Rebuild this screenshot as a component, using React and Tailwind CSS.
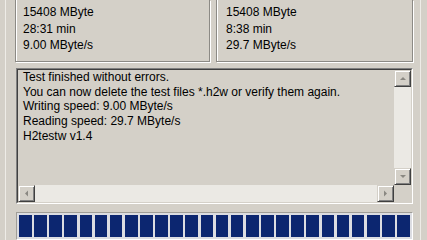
import React from 'react';

const font = "font-['Liberation_Sans',Arial,sans-serif]";

function Arrow({ dir }) {
  const pts = {
    up: '2,6 5,3 8,6',
    down: '2,3 5,6 8,3',
    left: '6,1.5 3,4.5 6,7.5',
    right: '3,1.5 6,4.5 3,7.5',
  }[dir];
  return (
    <svg width="10" height="9" viewBox="0 0 10 9">
      <polygon points={pts} fill="#8a8882" />
    </svg>
  );
}

function ScrollButton({ dir }) {
  return (
    <div className="w-[17px] h-[17px] shrink-0 bg-[#d4d0c8] border border-t-[#d4d0c8] border-l-[#d4d0c8] border-b-[#404040] border-r-[#404040] shadow-[inset_1px_1px_0_#ffffff,inset_-1px_-1px_0_#808080] flex items-center justify-center">
      <Arrow dir={dir} />
    </div>
  );
}

function GroupBox({ lines, indent }) {
  return (
    <div className={`flex-1 border-b border-l border-r border-[#8c8a85] shadow-[inset_1px_0_0_#ffffff,1px_1px_0_#ffffff] pt-[4px] ${indent}`}>
      {lines.map((l) => (
        <div key={l} className="leading-[16.5px]">{l}</div>
      ))}
    </div>
  );
}

export default function App() {
  const log = [
    'Test finished without errors.',
    'You can now delete the test files *.h2w or verify them again.',
    'Writing speed: 9.00 MByte/s',
    'Reading speed: 29.7 MByte/s',
    'H2testw v1.4',
  ];
  const blocks = Array.from({ length: 26 }, (_, i) => i);

  return (
    <div className={`w-[427px] h-[240px] overflow-hidden bg-[#d4d0c8] pl-[5px] pr-[6px] text-[12px] text-black ${font}`}>
      <div className="h-full border-l border-r border-[#eeece7] pl-[9px] pr-[7px] flex flex-col">
        <div className="flex gap-[6px] h-[62px] shrink-0">
          <GroupBox indent="pl-[7px]" lines={['15408 MByte', '28:31 min', '9.00 MByte/s']} />
          <GroupBox indent="pl-[9px]" lines={['15408 MByte', '8:38 min', '29.7 MByte/s']} />
        </div>

        <div className="mt-[6px] ml-[1px] h-[136px] shrink-0 border border-t-[#808080] border-l-[#808080] border-b-[#ffffff] border-r-[#ffffff]">
          <div className="h-full border border-t-[#404040] border-l-[#404040] border-b-[#d4d0c8] border-r-[#d4d0c8] flex flex-col">
            <div className="flex-1 flex min-h-0">
              <div className="flex-1 pl-[5px] whitespace-nowrap overflow-hidden">
                {log.map((l) => (
                  <div key={l} className="leading-[14.7px]">{l}</div>
                ))}
              </div>
              <div className="w-[17px] flex flex-col bg-[#ebe9e4]">
                <ScrollButton dir="up" />
                <div className="flex-1" />
                <ScrollButton dir="down" />
              </div>
            </div>
            <div className="h-[17px] flex shrink-0">
              <div className="flex-1 flex bg-[#ebe9e4]">
                <ScrollButton dir="left" />
                <div className="flex-1" />
                <ScrollButton dir="right" />
              </div>
              <div className="w-[17px] bg-[#d4d0c8]" />
            </div>
          </div>
        </div>

        <div className="mt-[8px] ml-[1px] h-[28px] shrink-0 border border-t-[#a09e98] border-l-[#a09e98] border-b-[#ffffff] border-r-[#ffffff] bg-[#dcdde2] p-[2px] flex gap-[2.4px]">
          {blocks.map((b) => (
            <div key={b} className="flex-1 bg-[#0c2670]" />
          ))}
        </div>
      </div>
    </div>
  );
}
